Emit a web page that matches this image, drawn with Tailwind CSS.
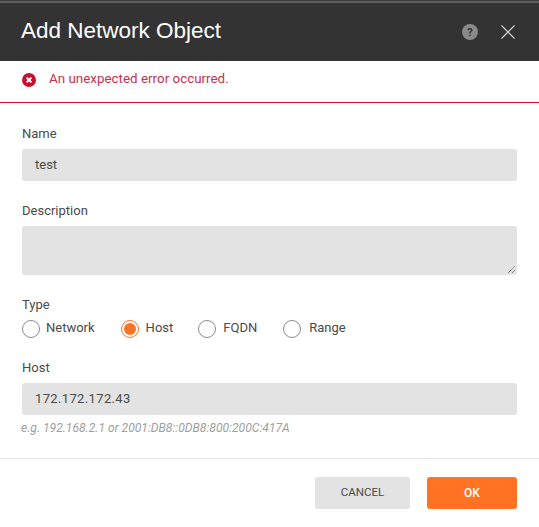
<!DOCTYPE html>
<html><head><meta charset="utf-8"><script src="https://cdn.jsdelivr.net/npm/@tailwindcss/browser@4"></script></head>
<body class="bg-white font-['Roboto',sans-serif] text-[13px] text-[#4a4a4a] w-[539px] h-[527px] overflow-hidden">
<div class="h-px bg-[#3a3a3a]"></div>
<div class="h-[2px] bg-[#5f5f5f]"></div>
<header class="h-[58px] bg-[#333333] flex items-center pl-[21px] pr-[24px]">
  <h1 class="font-['Liberation_Sans',sans-serif] text-[22.5px] text-white flex-1 -mt-[3px]">Add Network Object</h1>
  <svg class="w-[16px] h-[16px] mr-[23px]" viewBox="0 0 16 16"><circle cx="8" cy="8" r="8" fill="#8a8a8a"/><text x="8" y="12" text-anchor="middle" font-size="11" font-weight="700" font-family="Roboto" fill="#333">?</text></svg>
  <svg class="w-[14px] h-[14px]" viewBox="0 0 14 14"><path d="M.5.5l13 13M13.5.5l-13 13" stroke="#e0e0e0" stroke-width="1.1" fill="none"/></svg>
</header>
<div class="h-[42px] pb-[4px] border-b border-[#d0142c] flex items-center pl-[22px] gap-[13px] text-[#c9304c]">
  <svg class="w-[14px] h-[14px]" viewBox="0 0 14 14"><circle cx="7" cy="7" r="7" fill="#c8102e"/><path d="M4.6 4.6l4.8 4.8M9.4 4.6l-4.8 4.8" stroke="#fff" stroke-width="2"/></svg>
  <span class="text-[13.4px]">An unexpected error occurred.</span>
</div>
<form class="px-[22px] pt-[23px]">
  <label class="block leading-[16px] mb-[7px]">Name</label>
  <div class="h-[32px] rounded-[3px] bg-[#e3e3e3] flex items-center pl-[13px]">test</div>
  <label class="block leading-[16px] mt-[22px] mb-[7px]">Description</label>
  <div class="relative h-[49px] rounded-[3px] bg-[#e3e3e3]">
    <svg class="absolute right-[1px] bottom-[1px] w-[9px] h-[9px]" viewBox="0 0 9 9"><path d="M1 8l7-7M5 8l3-3" stroke="#555" stroke-width="1" stroke-dasharray="1 .6"/></svg>
  </div>
  <label class="block leading-[16px] mt-[22px] mb-[7px]">Type</label>
  <div class="flex items-center h-[18px]">
    <span class="w-[18px] h-[18px] rounded-full border border-[#8c8c8c]"></span><span class="ml-[6px] mr-[26px] -mt-[2px]">Network</span>
    <span class="w-[18px] h-[18px] rounded-full border border-[#ff7322] flex items-center justify-center"><span class="w-[12px] h-[12px] rounded-full bg-[#ff7322]"></span></span><span class="ml-[7px] mr-[25px] -mt-[2px]">Host</span>
    <span class="w-[18px] h-[18px] rounded-full border border-[#8c8c8c]"></span><span class="ml-[7px] mr-[26px] -mt-[2px]">FQDN</span>
    <span class="w-[18px] h-[18px] rounded-full border border-[#8c8c8c]"></span><span class="ml-[8px] -mt-[2px]">Range</span>
  </div>
  <label class="block leading-[16px] mt-[22px] mb-[7px]">Host</label>
  <div class="h-[32px] rounded-[3px] bg-[#e3e3e3] flex items-center pl-[13px] tracking-[0.36px]">172.172.172.43</div>
  <p class="italic text-[12.1px] text-[#a0a0a0] -ml-px mt-[5px] leading-[16px] whitespace-nowrap">e.g. 192.168.2.1 or 2001:DB8::0DB8:800:200C:417A</p>
</form>
<footer class="mt-[22px] border-t border-[#e3e3e3] flex justify-end gap-[17px] pt-[18px] pr-[22px]">
  <button class="w-[95px] h-[32px] rounded-[3px] bg-[#e3e3e3] text-[11.5px]">CANCEL</button>
  <button class="w-[90px] h-[32px] rounded-[3px] bg-[#ff7322] text-white text-[12px] font-medium">OK</button>
</footer>
</body></html>
